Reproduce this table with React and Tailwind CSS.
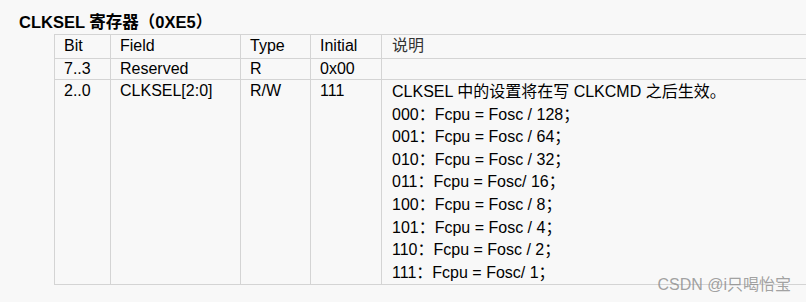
export default function App() {
  const font = { fontFamily: '"Liberation Sans", Arial, "Noto Sans CJK SC", sans-serif' }
  const rows = [
    '000：Fcpu = Fosc / 128；',
    '001：Fcpu = Fosc / 64；',
    '010：Fcpu = Fosc / 32；',
    '011：Fcpu = Fosc/ 16；',
    '100：Fcpu = Fosc / 8；',
    '101：Fcpu = Fosc / 4；',
    '110：Fcpu = Fosc / 2；',
    '111：Fcpu = Fosc/ 1；',
  ]
  const cell = 'border-l border-t border-[#d4d4d4] pl-[9px]'

  return (
    <div className="relative w-[806px] h-[302px] overflow-hidden bg-[#f8f8f8] text-black" style={font}>
      <h1 className="pl-[19px] pt-[11px] text-[16.5px] font-bold leading-[22px]">CLKSEL 寄存器（0XE5）</h1>

      <div className="ml-[54px] mt-[1px] grid grid-cols-[56px_130px_70px_71px_1fr] border-b border-[#d4d4d4] text-[16px]">
        {/* header */}
        <div className={`${cell} h-[24px] leading-[22px]`}>Bit</div>
        <div className={`${cell} h-[24px] leading-[22px]`}>Field</div>
        <div className={`${cell} h-[24px] leading-[22px]`}>Type</div>
        <div className={`${cell} h-[24px] leading-[22px]`}>Initial</div>
        <div className={`${cell} h-[24px] leading-[22px] pl-[10px] text-[#333]`}>说明</div>

        {/* reserved */}
        <div className={`${cell} h-[21px] leading-[20px]`}>7..3</div>
        <div className={`${cell} h-[21px] leading-[20px]`}>Reserved</div>
        <div className={`${cell} h-[21px] leading-[20px]`}>R</div>
        <div className={`${cell} h-[21px] leading-[20px]`}>0x00</div>
        <div className={`${cell} h-[21px]`}></div>

        {/* clksel */}
        <div className={`${cell} h-[205px] leading-[22.6px]`}>2..0</div>
        <div className={`${cell} leading-[22.6px]`}>CLKSEL[2:0]</div>
        <div className={`${cell} leading-[22.6px]`}>R/W</div>
        <div className={`${cell} leading-[22.6px]`}>111</div>
        <div className={`${cell} pl-[10px] pt-[1px] leading-[22.6px]`}>
          <div>CLKSEL 中的设置将在写 CLKCMD 之后生效。</div>
          {rows.map((r) => (
            <div key={r}>{r}</div>
          ))}
        </div>
      </div>

      <div className="absolute right-[15px] bottom-[7px] text-[16px] leading-[20px] text-[#8a8a8a]/80">CSDN @i只喝怡宝</div>
    </div>
  )
}
